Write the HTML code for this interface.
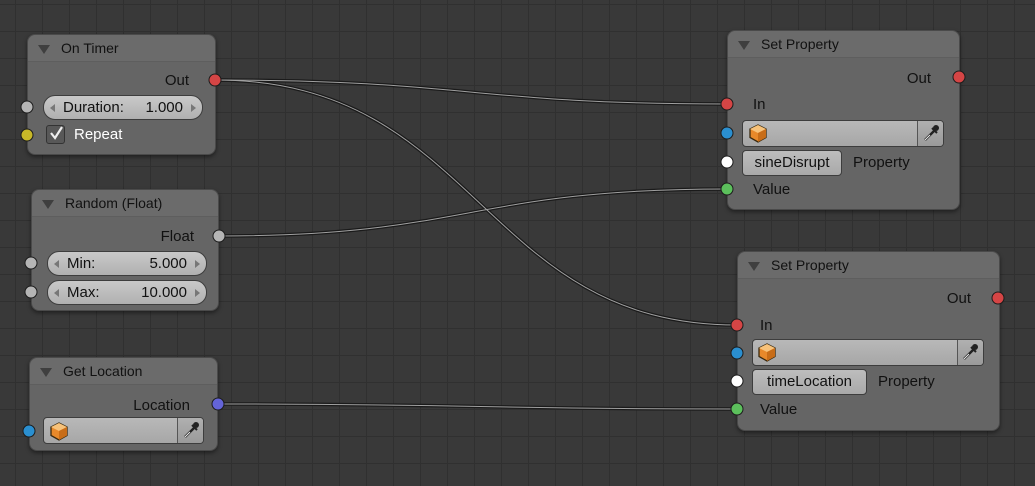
<!DOCTYPE html>
<html><head><meta charset="utf-8"><style>
*{margin:0;padding:0;box-sizing:border-box}
body{width:1035px;height:486px;overflow:hidden;background-color:#393939;
background-image:linear-gradient(to right,#303030 1px,transparent 1px),linear-gradient(to bottom,#303030 1px,transparent 1px);
background-size:27px 27px;background-position:15px 4px;
font-family:"Liberation Sans","DejaVu Sans",sans-serif;font-size:15px;color:#111;position:relative}
.node{position:absolute;background:#656565;border-radius:8px;box-shadow:0 2px 4px rgba(0,0,0,.45);border:1px solid #4a4a4a}
.hdr{position:absolute;left:0;right:0;top:0;height:27px;background:#6b6b6b;border-radius:8px 8px 0 0;border-bottom:1px solid #5e5e5e;font-size:14px}
.hdr span{position:absolute;left:33px;top:5px}
.tri{position:absolute;left:10px;top:10px;width:0;height:0;border-left:6px solid transparent;border-right:6px solid transparent;border-top:9px solid #3f3f3f}
.t{position:absolute;white-space:nowrap}
.num{position:absolute;height:25px;border-radius:12px;background:linear-gradient(#c9c9c9,#b0b0b0);border:1px solid #3d3d3d}
.num .l{position:absolute;left:19px;top:3px}
.num .r{position:absolute;right:19px;top:3px}
.num .al{position:absolute;left:6px;top:8px;border-top:4px solid transparent;border-bottom:4px solid transparent;border-right:5px solid #777}
.num .ar{position:absolute;right:6px;top:8px;border-top:4px solid transparent;border-bottom:4px solid transparent;border-left:5px solid #777}
.obj{position:absolute;height:27px;border-radius:4px;background:linear-gradient(#b8b8b8,#a7a7a7);border:1px solid #3d3d3d;overflow:hidden}
.obj .pk{position:absolute;right:0;top:0;bottom:0;width:26px;border-left:1px solid #555;background:linear-gradient(#b0b0b0,#9a9a9a)}
.btn{position:absolute;height:26px;border-radius:4px;background:linear-gradient(#bdbdbd,#a9a9a9);border:1px solid #3d3d3d;padding:3px 0 0 0;text-align:center}
svg.w{position:absolute;left:0;top:0}
</style></head><body>

<svg class="w" width="1035" height="486" style="z-index:0">
<g fill="none" stroke-linecap="round">
<g stroke="#1a1a1a" stroke-width="3.5">
<path d="M215 80 C470 80 470 104 727 104"/>
<path d="M215 80 C480 80 480 325 737 325"/>
<path d="M219 236 C470 236 470 189 727 189"/>
<path d="M218 404 C480 404 480 409 737 409"/>
</g>
<g stroke="#a0a0a0" stroke-width="1">
<path d="M215 80 C470 80 470 104 727 104"/>
<path d="M215 80 C480 80 480 325 737 325"/>
<path d="M219 236 C470 236 470 189 727 189"/>
<path d="M218 404 C480 404 480 409 737 409"/>
</g>
</g>
</svg>

<div class="node" style="left:27px;top:34px;width:189px;height:121px">
<div class="hdr"><div class="tri"></div><span>On Timer</span></div>
<div class="t" style="right:26px;top:37px">Out</div>
<div class="num" style="left:15px;top:60px;width:160px"><div class="al"></div><span class="l">Duration:</span><span class="r">1.000</span><div class="ar"></div></div>
<div style="position:absolute;left:18px;top:90px;width:19px;height:19px;border-radius:3px;background:#585858;border:1px solid #333"><svg width="19" height="19" style="position:absolute;left:0;top:-2px"><path d="M4 9 L8 14 L15 3" stroke="#eee" stroke-width="2.2" fill="none"/></svg></div>
<div class="t" style="left:46px;top:91px;color:#fff">Repeat</div>
</div>

<div class="node" style="left:31px;top:189px;width:188px;height:122px">
<div class="hdr"><div class="tri"></div><span>Random (Float)</span></div>
<div class="t" style="right:24px;top:38px">Float</div>
<div class="num" style="left:15px;top:61px;width:160px"><div class="al"></div><span class="l">Min:</span><span class="r">5.000</span><div class="ar"></div></div>
<div class="num" style="left:15px;top:90px;width:160px"><div class="al"></div><span class="l">Max:</span><span class="r">10.000</span><div class="ar"></div></div>
</div>

<div class="node" style="left:29px;top:357px;width:189px;height:94px">
<div class="hdr"><div class="tri"></div><span>Get Location</span></div>
<div class="t" style="right:27px;top:39px">Location</div>
<div class="obj" style="left:13px;top:59px;width:161px"><div class="pk"></div></div>
</div>

<div class="node" style="left:727px;top:30px;width:233px;height:180px">
<div class="hdr"><div class="tri"></div><span>Set Property</span></div>
<div class="t" style="right:28px;top:39px">Out</div>
<div class="t" style="left:25px;top:65px">In</div>
<div class="obj" style="left:14px;top:89px;width:202px"><div class="pk"></div></div>
<div class="btn" style="left:14px;top:119px;width:100px">sineDisrupt</div>
<div class="t" style="left:125px;top:123px">Property</div>
<div class="t" style="left:25px;top:150px">Value</div>
</div>

<div class="node" style="left:737px;top:251px;width:263px;height:180px">
<div class="hdr"><div class="tri"></div><span>Set Property</span></div>
<div class="t" style="right:28px;top:38px">Out</div>
<div class="t" style="left:22px;top:65px">In</div>
<div class="obj" style="left:14px;top:87px;width:232px"><div class="pk"></div></div>
<div class="btn" style="left:14px;top:117px;width:115px">timeLocation</div>
<div class="t" style="left:140px;top:121px">Property</div>
<div class="t" style="left:22px;top:149px">Value</div>
</div>

<svg class="w" width="1035" height="486" style="z-index:5">
<defs>
<g id="cube"><path d="M0 -8 L8 -4 L8 4.5 L0 9 L-8 4.5 L-8 -4 Z" fill="#e8892a" stroke="#3a2a10" stroke-width="1.3"/><path d="M0 -8 L8 -4 L0 0 L-8 -4 Z" fill="#f7c27a"/><path d="M0 0 L0 9 L8 4.5 L8 -4 Z" fill="#c86d18"/></g>
<g id="pick"><path d="M-6 7 L3 -2" stroke="#222" stroke-width="2.4"/><path d="M1 -5 L6 0" stroke="#222" stroke-width="2"/><circle cx="5" cy="-5" r="3" fill="#222"/><path d="M-6 7 L-1 2" stroke="#eee" stroke-width="1"/></g>
</defs>
<use href="#cube" x="59" y="431"/><use href="#pick" x="191" y="430"/>
<use href="#cube" x="758" y="133"/><use href="#pick" x="931" y="133"/>
<use href="#cube" x="767" y="352"/><use href="#pick" x="970" y="352"/>
<g stroke="#1c1c1c" stroke-width="1">
<circle cx="215" cy="80" r="6" fill="#d54545"/>
<circle cx="27" cy="107" r="6" fill="#b5b5b5"/>
<circle cx="27" cy="135" r="6" fill="#c8b828"/>
<circle cx="219" cy="236" r="6" fill="#b5b5b5"/>
<circle cx="31" cy="263" r="6" fill="#b5b5b5"/>
<circle cx="31" cy="292" r="6" fill="#b5b5b5"/>
<circle cx="218" cy="404" r="6" fill="#6464d8"/>
<circle cx="29" cy="431" r="6" fill="#2a8fd0"/>
<circle cx="959" cy="77" r="6" fill="#d54545"/>
<circle cx="727" cy="104" r="6" fill="#d54545"/>
<circle cx="727" cy="133" r="6" fill="#2a8fd0"/>
<circle cx="727" cy="162" r="6" fill="#ffffff"/>
<circle cx="727" cy="189" r="6" fill="#5cc05c"/>
<circle cx="998" cy="298" r="6" fill="#d54545"/>
<circle cx="737" cy="325" r="6" fill="#d54545"/>
<circle cx="737" cy="353" r="6" fill="#2a8fd0"/>
<circle cx="737" cy="381" r="6" fill="#ffffff"/>
<circle cx="737" cy="409" r="6" fill="#5cc05c"/>
</g>
</svg>
</body></html>
